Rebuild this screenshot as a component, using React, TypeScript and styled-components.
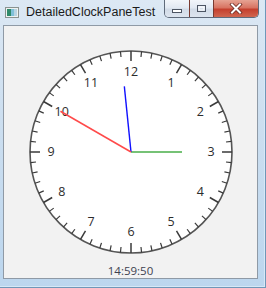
import React from 'react';
import styled, { createGlobalStyle } from 'styled-components';

const GlobalStyle = createGlobalStyle`
  html, body {
    margin: 0;
    padding: 0;
    background: #ffffff;
  }
  body {
    font-family: "Liberation Sans", "DejaVu Sans", sans-serif;
  }
`;

// Window chrome
const Frame = styled.div`
  width: 266px;
  height: 288px;
  box-sizing: border-box;
  display: flex;
  flex-direction: column;
  padding: 0 8px 10px 3px;
  background: linear-gradient(180deg, #dce8f4 0%, #cddff0 40%, #bcd6ee 100%);
  box-shadow: inset -1px -1px 0 #6f97b8, inset -2px -2px 0 #d7e8f6;
`;

const TitleBar = styled.div`
  height: 25px;
  display: flex;
  align-items: flex-start;
  flex-shrink: 0;
`;

const TitleIcon = styled.svg`
  margin: 7px 0 0 2px;
  flex-shrink: 0;
`;

const TitleText = styled.div`
  margin: 4px 0 0 7px;
  font-size: 12.5px;
  line-height: 16px;
  color: #1b1b1b;
  flex: 1;
  min-width: 0;
  white-space: nowrap;
`;

const CaptionGroup = styled.div`
  display: flex;
  flex-shrink: 0;
  height: 17px;
  margin-right: -1px;
  border: 1px solid #5f6a7a;
  border-top: none;
  border-radius: 0 0 5px 5px;
  overflow: hidden;
`;

const CaptionButton = styled.div<{ $close?: boolean; $w: number }>`
  width: ${(p) => p.$w}px;
  flex-shrink: 0;
  height: 17px;
  display: flex;
  align-items: center;
  justify-content: center;
  & + & {
    border-left: 1px solid ${(p) => (p.$close ? '#7a3a30' : '#8591a2')};
  }
  background: ${(p) =>
    p.$close
      ? 'linear-gradient(180deg, #e6a393 0%, #d87462 45%, #c5402e 55%, #d06650 100%)'
      : 'linear-gradient(180deg, #f2f5fa 0%, #e2e9f2 45%, #d2dbe7 55%, #dde5ef 100%)'};
`;

const Client = styled.div`
  flex: 1;
  display: flex;
  flex-direction: column;
  align-items: center;
  border: 1px solid #8f9aa6;
  background: #f2f2f2;
  padding-top: 21px;
`;

const ClockFace = styled.svg`
  display: block;
  flex-shrink: 0;
`;

const TimeLabel = styled.div`
  margin-top: 7px;
  font-family: "Open Sans", "Liberation Sans", sans-serif;
  font-size: 11.5px;
  line-height: 14px;
  color: #3e4250;
`;

const SIZE = 210;
const C = SIZE / 2;
const R = 101;

const polar = (deg: number, r: number) => {
  const a = ((deg - 90) * Math.PI) / 180;
  return { x: C + r * Math.cos(a), y: C + r * Math.sin(a) };
};

const hands = [
  { deg: 90, len: 51, color: '#76c276', width: 2 },
  { deg: 354.2, len: 66, color: '#1010ff', width: 1.4 },
  { deg: 300, len: 81.5, color: '#ff4a4a', width: 1.5 },
];

const Clock: React.FC = () => {
  const ticks = Array.from({ length: 60 }, (_, i) => {
    const major = i % 5 === 0;
    const p1 = polar(i * 6, R);
    const p2 = polar(i * 6, R - (major ? 10 : 5.5));
    return (
      <line
        key={i}
        x1={p1.x}
        y1={p1.y}
        x2={p2.x}
        y2={p2.y}
        stroke="#3a3a3a"
        strokeWidth={major ? 1.5 : 1.2}
      />
    );
  });

  const numbers = Array.from({ length: 12 }, (_, i) => {
    const n = i + 1;
    const p = polar(n * 30, 80);
    return (
      <text
        key={n}
        x={p.x}
        y={p.y + 4.3}
        textAnchor="middle"
        fontSize="12.5"
        fontFamily="'Open Sans', 'Liberation Sans', sans-serif"
        fill="#2c2c2c"
      >
        {n}
      </text>
    );
  });

  return (
    <ClockFace width={SIZE} height={SIZE} viewBox={`0 0 ${SIZE} ${SIZE}`}>
      <circle cx={C} cy={C} r={R} fill="#ffffff" stroke="#555555" strokeWidth={1.6} />
      {ticks}
      {numbers}
      {hands.map((h) => {
        const e = polar(h.deg, h.len);
        return (
          <line
            key={h.color}
            x1={C}
            y1={C}
            x2={e.x}
            y2={e.y}
            stroke={h.color}
            strokeWidth={h.width}
          />
        );
      })}
    </ClockFace>
  );
};

const App: React.FC = () => {
  return (
    <>
      <GlobalStyle />
      <Frame>
        <TitleBar>
          <TitleIcon width="14" height="11" viewBox="0 0 14 11">
            <rect x="0.5" y="0.5" width="13" height="10" fill="#eef2f0" stroke="#8a9290" />
            <rect x="2" y="2" width="4" height="7" fill="#2f8a6a" />
            <rect x="6" y="2" width="3" height="7" fill="#7fc0d8" />
            <rect x="9" y="2" width="3" height="7" fill="#b9d4e2" />
          </TitleIcon>
          <TitleText>DetailedClockPaneTest</TitleText>
          <CaptionGroup>
            <CaptionButton $w={24}>
              <svg width="12" height="8" viewBox="0 0 12 8">
                <rect x="1.5" y="4.5" width="9" height="3" fill="#ffffff" stroke="#4d5563" />
              </svg>
            </CaptionButton>
            <CaptionButton $w={23}>
              <svg width="11" height="9" viewBox="0 0 11 9">
                <rect x="1.5" y="1.5" width="8" height="6" fill="none" stroke="#4d5563" />
                <rect x="3" y="3" width="5" height="3" fill="none" stroke="#ffffff" />
              </svg>
            </CaptionButton>
            <CaptionButton $w={44} $close>
              <svg width="14" height="11" viewBox="0 0 14 11">
                <path d="M3 1.5 L11 9.5 M11 1.5 L3 9.5" stroke="#6a2a22" strokeWidth="3.6" strokeLinecap="square" />
                <path d="M3 1.5 L11 9.5 M11 1.5 L3 9.5" stroke="#ffffff" strokeWidth="2" strokeLinecap="square" />
              </svg>
            </CaptionButton>
          </CaptionGroup>
        </TitleBar>
        <Client>
          <Clock />
          <TimeLabel>14:59:50</TimeLabel>
        </Client>
      </Frame>
    </>
  );
};

export default App;
